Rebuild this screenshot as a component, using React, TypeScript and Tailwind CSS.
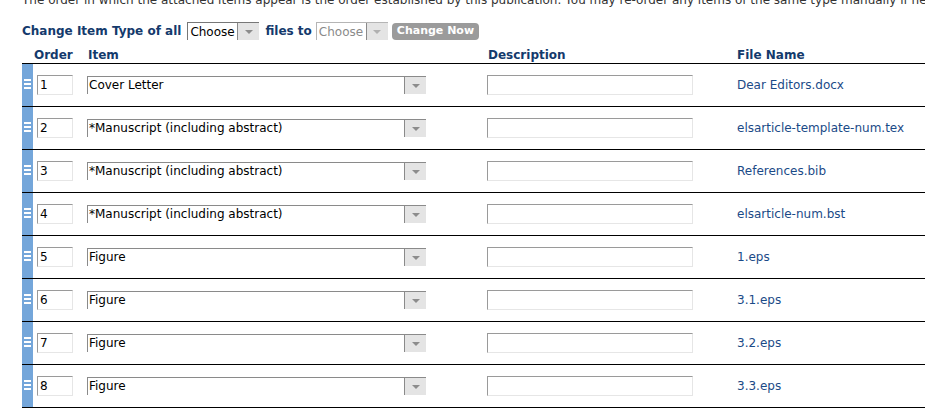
const rows = [
  { n: "1", item: "Cover Letter", file: "Dear Editors.docx" },
  { n: "2", item: "*Manuscript (including abstract)", file: "elsarticle-template-num.tex" },
  { n: "3", item: "*Manuscript (including abstract)", file: "References.bib" },
  { n: "4", item: "*Manuscript (including abstract)", file: "elsarticle-num.bst" },
  { n: "5", item: "Figure", file: "1.eps" },
  { n: "6", item: "Figure", file: "3.1.eps" },
  { n: "7", item: "Figure", file: "3.2.eps" },
  { n: "8", item: "Figure", file: "3.3.eps" },
];

function Arrow({ light }: { light?: boolean }) {
  return (
    <span className="flex h-full w-[22px] items-center justify-center border-l border-[#8a8a8a] bg-[#e4e4e4]">
      <svg width="8" height="4" viewBox="0 0 8 4">
        <path d="M0 0h8L4 4z" fill={light ? "#b0b0b0" : "#8c8c8c"} />
      </svg>
    </span>
  );
}

function Choose({ disabled }: { disabled?: boolean }) {
  return (
    <div
      className={
        "flex h-[18px] w-[72px] items-stretch border-t border-l bg-white " +
        (disabled ? "border-[#b5b5b5] text-[#8a8a8a]" : "border-[#777] text-black")
      }
    >
      <span className="flex-1 overflow-hidden pl-[2px] pt-[1px] text-[12px] leading-[16px] font-normal">Choose</span>
      <Arrow light={disabled} />
    </div>
  );
}

function Grip() {
  return (
    <div className="flex w-[11px] shrink-0 flex-col items-center justify-center gap-[2px] self-stretch bg-[#74a6da] pb-[3px]">
      <span className="h-[2px] w-[7px] bg-white" />
      <span className="h-[2px] w-[7px] bg-white" />
      <span className="h-[2px] w-[7px] bg-white" />
    </div>
  );
}

export default function App() {
  return (
    <div className="h-[411px] w-[925px] overflow-hidden bg-white pl-[22px] font-['DejaVu_Sans',Verdana,sans-serif] text-[12px]">
      <p className="-mt-[7px] whitespace-nowrap leading-[15px] text-[#333]">
        The order in which the attached items appear is the order established by this publication. You may re-order any items of the same type manually if needed.
      </p>

      <div className="mt-[14px] flex h-[18px] items-center whitespace-nowrap font-bold text-[#143a6c]">
        <span>Change Item Type of all</span>
        <span className="ml-[6px]"><Choose /></span>
        <span className="ml-[6px]">files to</span>
        <span className="ml-[4px]"><Choose disabled /></span>
        <span className="ml-[4px] flex h-[17px] items-center rounded-[4px] bg-[#9b9b9b] px-[5px] text-[11px] text-white">Change Now</span>
      </div>

      <div className="mt-[6px] flex h-[17px] items-center font-bold text-[#143a6c]">
        <span className="w-[66px] pl-[12px]">Order</span>
        <span className="w-[400px]">Item</span>
        <span className="w-[249px]">Description</span>
        <span>File Name</span>
      </div>

      <div className="border-t border-black">
        {rows.map((r) => (
          <div key={r.n} className="flex h-[43px] items-center border-b border-black">
            <Grip />
            <div className="ml-[4px] h-[20px] w-[36px] border-t border-l border-[#9a9a9a] border-r border-b border-r-[#e6e6e6] border-b-[#e6e6e6] pl-[2px] leading-[18px] text-black">
              {r.n}
            </div>
            <div className="ml-[14px] flex h-[18px] w-[339px] items-stretch border-t border-l border-[#8a8a8a] bg-white">
              <span className="flex-1 pl-[1px] leading-[16px] text-black">{r.item}</span>
              <Arrow />
            </div>
            <div className="ml-[61px] h-[20px] w-[206px] border-t border-l border-[#9a9a9a] border-r border-b border-r-[#e6e6e6] border-b-[#e6e6e6]" />
            <span className="ml-[44px] text-[#1b4a87]">{r.file}</span>
          </div>
        ))}
      </div>
    </div>
  );
}
